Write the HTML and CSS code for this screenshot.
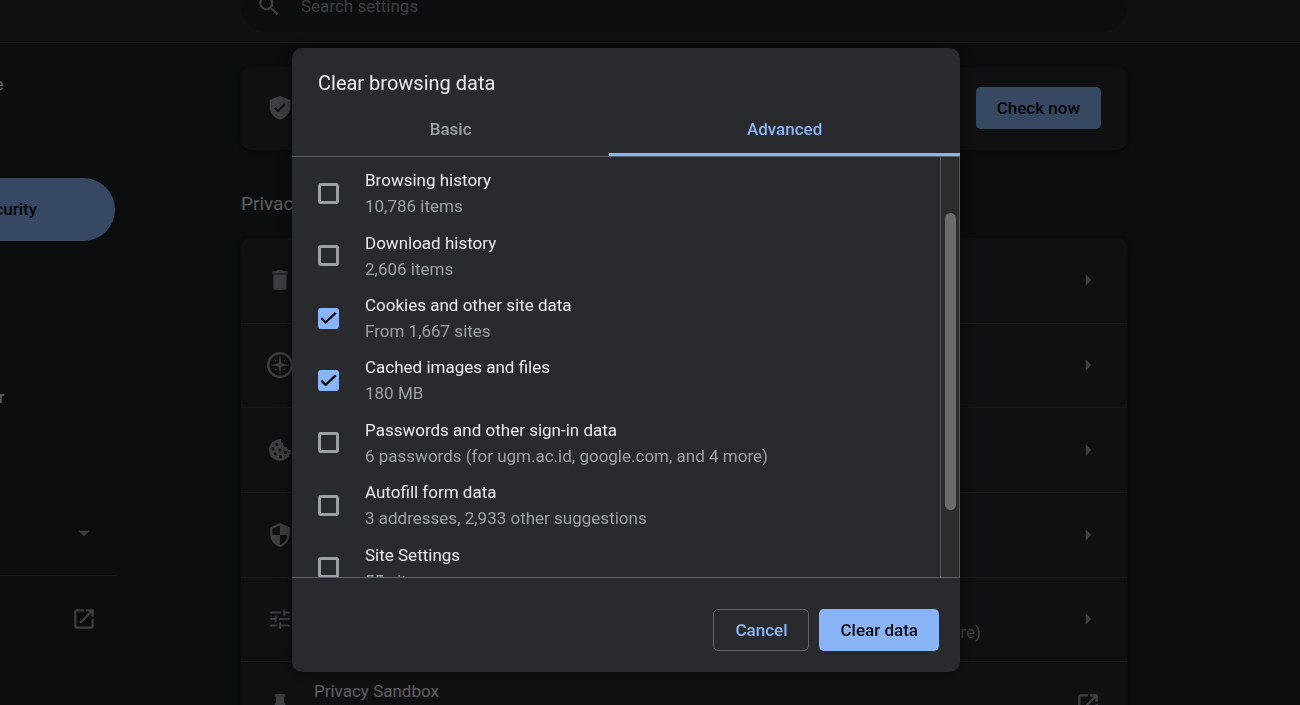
FILE: index.html
```html
<!doctype html>
<html lang="en">
<head>
	<meta charset="UTF-8" />
	<title>Settings - Privacy and security</title>
	<link rel="stylesheet" href="styles.css">
</head>
<body>
	<header class="toolbar">
		<label class="search">
			<svg class="icon" viewBox="0 0 24 24"><path d="M15.5 14h-.79l-.28-.27A6.47 6.47 0 0 0 16 9.5 6.5 6.5 0 1 0 9.5 16c1.61 0 3.09-.59 4.23-1.57l.27.28v.79l5 4.99L20.49 19l-4.99-5zm-6 0a4.5 4.5 0 1 1 0-9 4.5 4.5 0 0 1 0 9z"/></svg>
			<input type="text" placeholder="Search settings" aria-label="Search settings">
		</label>
	</header>

	<div class="page">
		<nav class="sidebar">
			<div class="menu">
				<a href="#">You and Google</a>
				<a href="#">Autofill</a>
				<a href="#" class="selected">Privacy and security</a>
				<a href="#">Appearance</a>
				<a href="#">Search engine</a>
				<a href="#">Default browser</a>
				<a href="#">On startup</a>
			</div>
			<button class="advanced">Advanced
				<svg class="icon" viewBox="0 0 24 24"><path d="M7 10l5 5 5-5z"/></svg>
			</button>
			<a href="#" class="extensions">Extensions
				<svg class="icon" viewBox="0 0 24 24"><path d="M19 19H5V5h7V3H5a2 2 0 0 0-2 2v14a2 2 0 0 0 2 2h14c1.1 0 2-.9 2-2v-7h-2v7zM14 3v2h3.59l-9.83 9.83 1.41 1.41L19 6.41V10h2V3h-7z"/></svg>
			</a>
		</nav>

		<main class="content">
			<section class="card safety">
				<svg class="icon" viewBox="0 0 24 24"><path fill-rule="evenodd" d="M12 1 2.500 4.500V11c0 5.500 4 9.800 9.500 11.800 5.500-2 9.500-6.300 9.500-11.800V4.500L12 1zm-1.800 15.200L6.500 12.500l1.400-1.400 2.300 2.300 5.700-5.800L17.300 9l-7.100 7.200z"/></svg>
				<p>Chrome can help keep you safe from data breaches, bad extensions, and more</p>
				<button class="btn primary">Check now</button>
			</section>

			<h2>Privacy and security</h2>

			<section class="card rows">
				<a href="#" class="row">
					<svg class="icon" viewBox="0 0 24 24"><path d="M6 19c0 1.100.9 2 2 2h8c1.100 0 2-.9 2-2V7H6v12zM19 4h-3.500l-1-1h-5l-1 1H5v2h14V4z"/></svg>
					<div class="text">Clear browsing data<span>Clear history, cookies, cache, and more</span></div>
					<svg class="icon" viewBox="0 0 24 24"><path d="M10 17l5-5-5-5z"/></svg>
				</a>
				<a href="#" class="row">
					<svg class="icon" viewBox="0 0 24 24">
						<circle cx="12" cy="12" r="10.900" fill="none" stroke="currentColor" stroke-width="2.200"/>
						<path d="M12 3l1.300 7.700 7.700 1.300-7.700 1.300-1.300 7.700-1.300-7.700-7.700-1.300 7.700-1.300z"/>
						<path d="M6.500 6.500l2.700 1.600-1.100 1.100zM17.500 6.500l-1.600 2.700-1.100-1.100zM17.500 17.500l-2.700-1.600 1.100-1.100zM6.500 17.500l1.600-2.700 1.100 1.100z"/>
					</svg>
					<div class="text">Privacy Guide<span>Review key privacy and security controls</span></div>
					<svg class="icon" viewBox="0 0 24 24"><path d="M10 17l5-5-5-5z"/></svg>
				</a>
				<a href="#" class="row">
					<svg class="icon" viewBox="0 0 24 24"><path fill-rule="evenodd" d="M13 2.100A10 10 0 1 0 21.900 12a3 3 0 0 1-3.400-2.600 3.200 3.200 0 0 1-3.700-3.600A3.200 3.200 0 0 1 13 2.100zM9 5.200a1.500 1.500 0 1 1 0 3 1.500 1.500 0 0 1 0-3zM5.500 9.500a1.500 1.500 0 1 1 0 3 1.500 1.500 0 0 1 0-3zM12 10.500a1.500 1.500 0 1 1 0 3 1.500 1.500 0 0 1 0-3zM17 13a1.500 1.500 0 1 1 0 3 1.500 1.500 0 0 1 0-3zM7.500 14a1.500 1.500 0 1 1 0 3 1.500 1.500 0 0 1 0-3zM12.500 16.500a1.500 1.500 0 1 1 0 3 1.500 1.500 0 0 1 0-3z"/></svg>
					<div class="text">Cookies and other site data<span>Third-party cookies are blocked in Incognito mode</span></div>
					<svg class="icon" viewBox="0 0 24 24"><path d="M10 17l5-5-5-5z"/></svg>
				</a>
				<a href="#" class="row">
					<svg class="icon" viewBox="0 0 24 24"><path d="M12 1 3 5v6c0 5.550 3.840 10.740 9 12 5.160-1.260 9-6.450 9-12V5l-9-4zm0 10.990h7c-.53 4.120-3.280 7.790-7 8.940V12H5V6.300l7-3.110v8.800z"/></svg>
					<div class="text">Security<span>Safe Browsing (protection from dangerous sites) and other security settings</span></div>
					<svg class="icon" viewBox="0 0 24 24"><path d="M10 17l5-5-5-5z"/></svg>
				</a>
				<a href="#" class="row">
					<svg class="icon" viewBox="0 0 24 24"><path d="M3 17v2h6v-2H3zM3 5v2h10V5H3zm10 16v-2h8v-2h-8v-2h-2v6h2zM7 9v2H3v2h4v2h2V9H7zm14 4v-2H11v2h10zm-6-4h2V7h4V5h-4V3h-2v6z"/></svg>
					<div class="text">Site Settings<span>Controls what information sites can use and show (location, camera, pop-ups, and more)</span></div>
					<svg class="icon" viewBox="0 0 24 24"><path d="M10 17l5-5-5-5z"/></svg>
				</a>
				<a href="#" class="row">
					<svg class="icon" viewBox="0 0 24 24"><path d="M7 3h10v2h-1.500v5l5 8.500c.7 1.200-.1 2.500-1.500 2.500H5c-1.400 0-2.200-1.300-1.500-2.500l5-8.500V5H7z"/></svg>
					<div class="text">Privacy Sandbox<span>Trial features are on</span></div>
					<svg class="icon" viewBox="0 0 24 24"><path d="M19 19H5V5h7V3H5a2 2 0 0 0-2 2v14a2 2 0 0 0 2 2h14c1.100 0 2-.9 2-2v-7h-2v7zM14 3v2h3.590l-9.830 9.830 1.410 1.410L19 6.410V10h2V3h-7z"/></svg>
				</a>
			</section>
		</main>
	</div>

	<div class="overlay">
		<div class="dialog" role="dialog" aria-labelledby="title">
			<h1 id="title">Clear browsing data</h1>
			<div class="tabs" role="tablist">
				<button role="tab">Basic</button>
				<button role="tab" class="active">Advanced</button>
			</div>
			<div class="body">
				<div class="list">
					<label class="item">
						<input type="checkbox">
						<div class="text">Browsing history<span>10,786 items</span></div>
					</label>
					<label class="item">
						<input type="checkbox">
						<div class="text">Download history<span>2,606 items</span></div>
					</label>
					<label class="item">
						<input type="checkbox" checked>
						<div class="text">Cookies and other site data<span>From 1,667 sites</span></div>
					</label>
					<label class="item">
						<input type="checkbox" checked>
						<div class="text">Cached images and files<span>180 MB</span></div>
					</label>
					<label class="item">
						<input type="checkbox">
						<div class="text">Passwords and other sign-in data<span>6 passwords (for ugm.ac.id, google.com, and 4 more)</span></div>
					</label>
					<label class="item">
						<input type="checkbox">
						<div class="text">Autofill form data<span>3 addresses, 2,933 other suggestions</span></div>
					</label>
					<label class="item">
						<input type="checkbox">
						<div class="text">Site Settings<span>55 sites</span></div>
					</label>
				</div>
				<div class="scrollbar"><div class="thumb"></div></div>
			</div>
			<div class="footer">
				<button class="btn">Cancel</button>
				<button class="btn primary">Clear data</button>
			</div>
		</div>
	</div>
</body>
</html>
```
FILE: styles.css
```css
*{box-sizing: border-box;}
body{
	margin: 0;
	height: 100vh;
	overflow: hidden;
	background: #202124;
	color: #e8eaed;
	font: 17px/26px Roboto, "Liberation Sans", sans-serif;
}
a{color: inherit;text-decoration: none;}
button,input{font: inherit;color: inherit;}
h1,h2,p{margin: 0;}

.icon{width: 26px;height: 26px;flex: none;fill: currentColor;color: #9aa0a6;}

/* toolbar */
.toolbar{
	display: flex;
	align-items: flex-end;
	height: 43px;
	padding: 0 173px 10px 241px;
	overflow: hidden;
	background: #292a2d;
	border-bottom: 1px solid #3f4042;
}
.search{
	display: flex;
	flex: 1;
	align-items: center;
	gap: 19px;
	height: 52px;
	padding: 0 15px;
	border-radius: 26px;
	background: #202124;
}
.search input{
	flex: 1;
	padding: 0;
	border: 0;
	outline: 0;
	background: none;
}
.search input::placeholder{color: #9aa0a6;opacity: 1;}

.page{display: flex;gap: 124px;}

/* side menu, its left part is outside the window */
.sidebar{
	flex: none;
	width: 233px;
	margin-left: -116px;
	padding-top: 10px;
	font-weight: 500;
}
.menu{
	display: grid;
	grid-auto-rows: 1fr;
	height: 438px;
	padding-right: 2px;
}
.menu a{display: flex;align-items: center;}
.menu .selected{
	border-radius: 0 32px 32px 0;
	background: #8ab4f8;
	color: #0b0c0f;
}
.advanced,.extensions{
	display: flex;
	align-items: center;
	justify-content: space-between;
	width: 100%;
	height: 85px;
	padding: 0 20px 0 0;
	border: 0;
	background: none;
}
.advanced{border-bottom: 1px solid #3f4042;}

/* settings */
.content{flex: 1;min-width: 0;padding: 24px 173px 0 0;}
.content h2{
	padding: 41px 0 21px;
	font-size: 19px;
	font-weight: 400;
}
.card{
	border-radius: 10px;
	background: #292a2d;
	box-shadow: 0 1px 4px rgba(0,0,0,.4);
}
.safety{
	display: flex;
	align-items: center;
	gap: 21px;
	height: 83px;
	padding: 0 26px 1px;
}
.safety p{flex: 1;}
.rows{display: grid;grid-auto-rows: 1fr;height: 508px;}
.row{
	display: flex;
	align-items: center;
	gap: 21px;
	padding: 0 26px;
}
.row + .row{border-top: 1px solid #3f4042;}
.text{flex: 1;}
.text span{display: block;color: #9aa0a6;}

.btn{
	height: 42px;
	padding: 0 21px;
	border: 1px solid #5f6368;
	border-radius: 5px;
	background: none;
	color: #8ab4f8;
	font-weight: 500;
}
.primary{
	border: 0;
	background: #8ab4f8;
	color: #0b0c0f;
}

/* dialog */
.overlay{
	position: fixed;
	top: 0;
	right: 0;
	bottom: 0;
	left: 0;
	display: flex;
	align-items: flex-start;
	justify-content: center;
	padding: 48px 48px 0 0;
	background: rgba(0,0,0,.6);
}
.dialog{
	width: 668px;
	border-radius: 10px;
	overflow: hidden;
	background: #292a2d;
	box-shadow: 0 0 20px rgba(0,0,0,.5);
}
.dialog h1{
	padding: 22px 26px 8px;
	font-size: 20px;
	font-weight: 400;
}
.tabs{
	display: flex;
	border-bottom: 1px solid #5f6368;
}
.tabs button{
	flex: 1 1 auto;
	height: 52px;
	padding: 0;
	border: 0;
	border-bottom: 3px solid transparent;
	background: none;
	color: #9aa0a6;
	font-weight: 500;
}
.tabs .active{border-color: #8ab4f8;color: #8ab4f8;}
.body{
	display: flex;
	height: 420px;
	overflow: hidden;
}
.list{
	display: grid;
	flex: 1;
	grid-auto-rows: 1fr;
	height: 442px;
	padding: 5px 26px 0;
}
.item{
	display: flex;
	align-items: center;
	gap: 26px;
}
.item input{
	appearance: none;
	display: flex;
	align-items: center;
	justify-content: center;
	width: 21px;
	height: 21px;
	margin: 0;
	border: 3px solid #9aa0a6;
	border-radius: 3px;
}
.item input:checked{border: 0;background: #8ab4f8;}
.item input:checked::before{
	content: "";
	width: 16px;
	height: 12px;
	background: #0b0c0f;
	clip-path: polygon(32% 74%, 10% 44%, 0 58%, 32% 100%, 100% 14%, 90% 0);
}
.scrollbar{
	width: 20px;
	padding: 56px 3px 0 4px;
	border: solid #55565a;
	border-width: 0 1px;
	background: #2c2c2c;
}
.thumb{
	height: 297px;
	border-radius: 6px;
	background: #6b6b6b;
}
.footer{
	display: flex;
	justify-content: flex-end;
	gap: 10px;
	padding: 31px 21px 21px 20px;
	border-top: 1px solid #5f6368;
}
```
